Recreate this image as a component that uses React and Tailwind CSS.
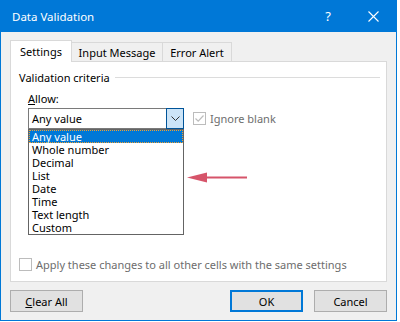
import React from 'react';

const OPTIONS = [
  'Any value',
  'Whole number',
  'Decimal',
  'List',
  'Date',
  'Time',
  'Text length',
  'Custom',
];

function Checkbox({ checked = false }) {
  return (
    <div className="w-[13px] h-[13px] border border-[#bcbcbc] bg-white flex items-center justify-center shrink-0">
      {checked && (
        <svg width="11" height="11" viewBox="0 0 11 11">
          <path d="M1.5 5.5 L4.2 8.2 L9.5 2.5" fill="none" stroke="#bcbcbc" strokeWidth="1.2" />
        </svg>
      )}
    </div>
  );
}

export default function App() {
  return (
    <div className="w-[400px] h-[322px] bg-white font-['Noto_Sans',sans-serif] text-[11px] text-black leading-none">
      <div className="w-[397px] h-[321px] border border-[#0078d7] bg-[#f0f0f0] flex flex-col">
        {/* Title bar */}
        <div className="h-[31px] bg-[#0078d7] text-white flex items-center pl-[11px] pr-[17px] shrink-0">
          <span className="text-[11.5px]">Data Validation</span>
          <span className="ml-auto mr-[37px] text-[13px]">?</span>
          <svg width="11" height="11" viewBox="0 0 11 11">
            <path d="M0.5 0.5 L10.5 10.5 M10.5 0.5 L0.5 10.5" stroke="white" strokeWidth="1.1" />
          </svg>
        </div>

        <div className="px-[9px] flex flex-col">
          {/* Tabs */}
          <div className="mt-[8px] h-[21px] flex items-end">
            <div className="relative z-10 -mb-px h-[22px] w-[62px] bg-white border border-b-0 border-[#d9d9d9] flex items-center justify-center">
              Settings
            </div>
            <div className="h-[19px] w-[91px] border-t border-r border-[#d9d9d9] flex items-center justify-center">
              Input Message
            </div>
            <div className="h-[19px] w-[69px] border-t border-r border-[#d9d9d9] flex items-center justify-center">
              Error Alert
            </div>
          </div>

          {/* Panel */}
          <div className="relative h-[221px] bg-white border border-[#d9d9d9] flex flex-col">
            <div className="mt-[8px] h-[14px] flex items-center pl-[8px] pr-[6px]">
              <span>Validation criteria</span>
              <div className="flex-1 h-px bg-[#dcdcdc] ml-[5px]" />
            </div>

            <div className="mt-[7px] h-[14px] flex items-center pl-[17px]">
              <span><span className="underline">A</span>llow:</span>
            </div>

            <div className="mt-[3px] pl-[17px] flex items-center">
              <div className="relative w-[156px] h-[21px] border border-[#7a7a7a] bg-white flex items-center">
                <span className="pl-[3px]">Any value</span>
                <div className="ml-auto h-[21px] w-[18px] -mr-px -my-px border border-[#005499] bg-[#cce4f7] flex items-center justify-center">
                  <svg width="9" height="5" viewBox="0 0 9 5">
                    <path d="M0.5 0.5 L4.5 4.5 L8.5 0.5" fill="none" stroke="#333" strokeWidth="1" />
                  </svg>
                </div>

                {/* Open dropdown list */}
                <div className="absolute left-[-1px] top-[20px] w-[156px] border border-[#646464] bg-white flex flex-col">
                  {OPTIONS.map((opt, i) => (
                    <div
                      key={opt}
                      className={
                        i === 0
                          ? 'h-[13px] bg-[#0078d7] text-white border border-dotted border-[#f0a030] flex items-center pl-[2px]'
                          : 'h-[13px] flex items-center pl-[3px]'
                      }
                    >
                      {opt}
                    </div>
                  ))}
                </div>
              </div>

              <div className="ml-[9px] flex items-center gap-[4px] text-[#6d6d6d]">
                <Checkbox checked />
                <span>Ignore blank</span>
              </div>
            </div>

            {/* Annotation arrow */}
            <svg className="absolute left-[176px] top-[110px]" width="62" height="11" viewBox="0 0 62 11">
              <path d="M0 5.5 L20 0.5 L20 10.5 Z" fill="#d6546a" />
              <path d="M18 5.5 L60 5.5" stroke="#d6546a" strokeWidth="2" />
            </svg>

            <div className="mt-auto mb-[10px] h-[14px] flex items-center pl-[8px] gap-[4px] text-[#6d6d6d]">
              <Checkbox />
              <span>Apply these changes to all other cells with the same settings</span>
            </div>
          </div>

          {/* Buttons */}
          <div className="mt-[8px] flex items-center">
            <button className="w-[73px] h-[22px] bg-[#e1e1e1] border border-[#adadad] flex items-center justify-center">
              <span><span className="underline">C</span>lear All</span>
            </button>
            <button className="ml-auto w-[73px] h-[22px] bg-[#e1e1e1] border-2 border-[#0078d7] flex items-center justify-center">
              OK
            </button>
            <button className="ml-[11px] w-[73px] h-[22px] bg-[#e1e1e1] border border-[#adadad] flex items-center justify-center">
              Cancel
            </button>
          </div>
        </div>
      </div>
    </div>
  );
}
